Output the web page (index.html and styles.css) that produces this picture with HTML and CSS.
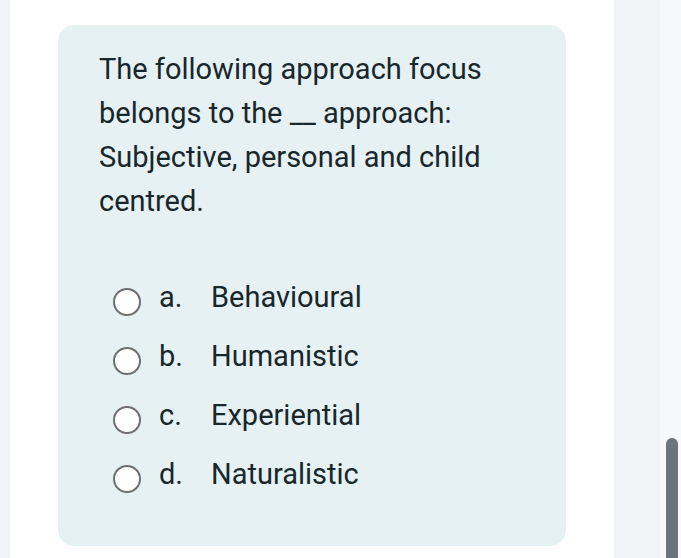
FILE: index.html
```html
<!DOCTYPE html>
<html>
<head>
<meta charset="utf-8">
<link rel="stylesheet" href="styles.css">
</head>
<body>
<div class="page">
  <div class="gutter-left"></div>
  <main class="main">
    <section class="card">
      <p class="question">The following approach focus belongs to the __ approach: Subjective, personal and child centred.</p>
      <ul class="options">
        <li class="option"><span class="radio"></span><span class="letter">a.</span><span class="label">Behavioural</span></li>
        <li class="option"><span class="radio"></span><span class="letter">b.</span><span class="label">Humanistic</span></li>
        <li class="option"><span class="radio"></span><span class="letter">c.</span><span class="label">Experiential</span></li>
        <li class="option"><span class="radio"></span><span class="letter">d.</span><span class="label">Naturalistic</span></li>
      </ul>
    </section>
  </main>
  <aside class="side"></aside>
  <div class="scrolltrack"><div class="thumb"></div></div>
</div>
</body>
</html>
```
FILE: styles.css
```css
html, body {
  margin: 0;
  padding: 0;
  height: 100%;
  overflow: hidden;
}
body {
  font-family: Roboto, "Liberation Sans", sans-serif;
  background: #ffffff;
}
.page {
  display: flex;
  height: 558px;
  width: 681px;
}
.gutter-left {
  width: 10px;
  background: #f2f3f7;
  flex: none;
}
.main {
  width: 604px;
  flex: none;
  background: #ffffff;
  padding: 25px 0 0 48px;
  box-sizing: border-box;
}
.card {
  width: 508px;
  height: 521px;
  box-sizing: border-box;
  background: #e6f1f4;
  border-radius: 16px;
  padding: 22px 30px 0 41px;
}
.question {
  margin: 0;
  font-size: 29px;
  line-height: 44px;
  color: #17272b;
  width: 420px;
}
.options {
  list-style: none;
  margin: 44px 0 0 0;
  padding: 0 0 0 14px;
}
.option {
  display: flex;
  align-items: center;
  height: 59px;
  font-size: 29px;
  color: #17272b;
}
.radio {
  width: 24px;
  height: 24px;
  border: 2px solid #6e6e6e;
  border-radius: 50%;
  background: #ffffff;
  flex: none;
  margin-top: 10px;
}
.letter {
  margin-left: 18px;
  width: 52px;
}
.side {
  width: 46px;
  flex: none;
  background: #f2f3f7;
}
.scrolltrack {
  width: 21px;
  flex: none;
  background: #f7f8fa;
  padding-top: 438px;
  box-sizing: border-box;
}
.thumb {
  width: 12px;
  margin-left: 6px;
  height: 140px;
  border-radius: 6px;
  background: #6b747c;
}
```
